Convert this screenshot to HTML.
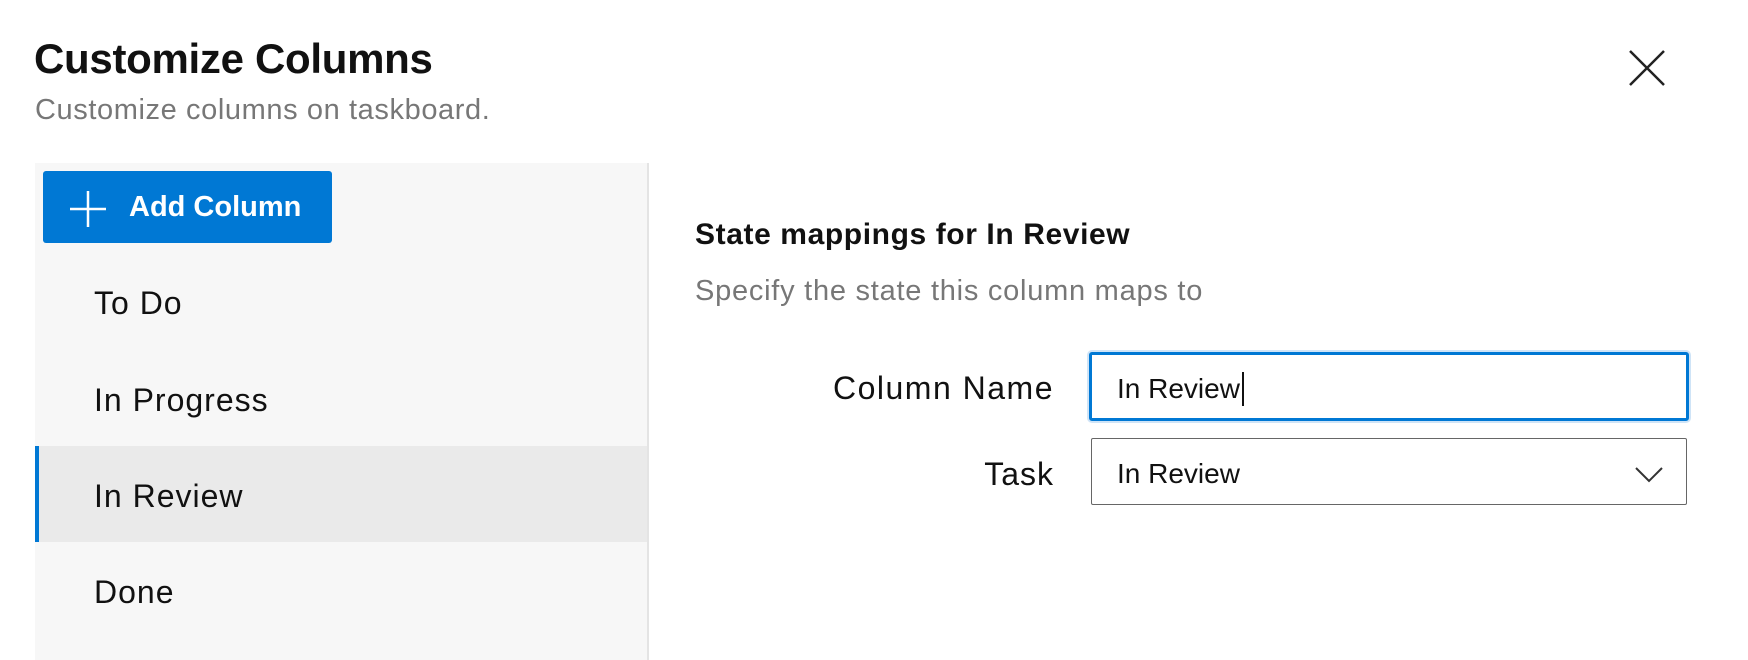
<!DOCTYPE html>
<html><head><meta charset="utf-8"><style>
*{margin:0;padding:0;box-sizing:border-box}
body{width:1748px;height:660px;background:#fff;font-family:"Liberation Sans",sans-serif;color:#111;position:relative;overflow:hidden}
.a{position:absolute;white-space:nowrap}
.it{left:94px;font-size:32px;letter-spacing:1px;line-height:36px}
</style></head><body>
<div class="a" style="left:34px;top:34px;font-size:42px;font-weight:bold;letter-spacing:-0.3px;line-height:50px">Customize Columns</div>
<div class="a" style="left:35px;top:94px;font-size:29px;letter-spacing:0.6px;color:#777;line-height:32px">Customize columns on taskboard.</div>
<svg class="a" style="left:1628px;top:49px" width="38" height="38"><path d="M2 2L36 36M36 2L2 36" stroke="#222" stroke-width="2.5"/></svg>

<div class="a" style="left:35px;top:163px;width:614px;height:497px;background:#f7f7f7;border-right:2px solid #e4e4e4"></div>
<div class="a" style="left:43px;top:171px;width:289px;height:72px;background:#0078d4;border-radius:3px"></div>
<svg class="a" style="left:70px;top:191px" width="36" height="36"><path d="M18 0V36M0 18H36" stroke="#fff" stroke-width="2.5"/></svg>
<div class="a" style="left:129px;top:190px;font-size:29px;font-weight:bold;color:#fff;line-height:34px">Add Column</div>
<div class="a" style="left:35px;top:446px;width:612px;height:96px;background:#eaeaea;border-left:4px solid #0078d4"></div>
<div class="a it" style="top:285px">To Do</div>
<div class="a it" style="top:382px">In Progress</div>
<div class="a it" style="top:478px">In Review</div>
<div class="a it" style="top:574px">Done</div>

<div class="a" style="left:695px;top:218px;font-size:30px;letter-spacing:0.6px;font-weight:bold;line-height:34px">State mappings for In Review</div>
<div class="a" style="left:695px;top:274px;font-size:29px;letter-spacing:0.75px;color:#777;line-height:34px">Specify the state this column maps to</div>
<div class="a" style="right:694px;top:370px;font-size:32px;letter-spacing:1.5px;line-height:36px">Column Name</div>
<div class="a" style="left:1087px;top:350px;width:604px;height:73px;border:3px solid #cfe4f7;border-radius:5px"></div>
<div class="a" style="left:1089px;top:352px;width:600px;height:69px;border:3px solid #0078d4;border-radius:3px;background:#fff"></div>
<div class="a" style="left:1117px;top:372px;font-size:28px;line-height:32px">In Review<span style="display:inline-block;width:2px;height:34px;background:#111;vertical-align:-8px;margin-left:2px"></span></div>
<div class="a" style="right:694px;top:456px;font-size:32px;letter-spacing:1px;line-height:36px">Task</div>
<div class="a" style="left:1091px;top:438px;width:596px;height:67px;border:1.5px solid #666;border-radius:2px"></div>
<div class="a" style="left:1117px;top:458px;font-size:28px;line-height:32px">In Review</div>
<svg class="a" style="left:1635px;top:466px" width="28" height="18"><path d="M1 2L14 15L27 2" fill="none" stroke="#333" stroke-width="2"/></svg>
</body></html>
